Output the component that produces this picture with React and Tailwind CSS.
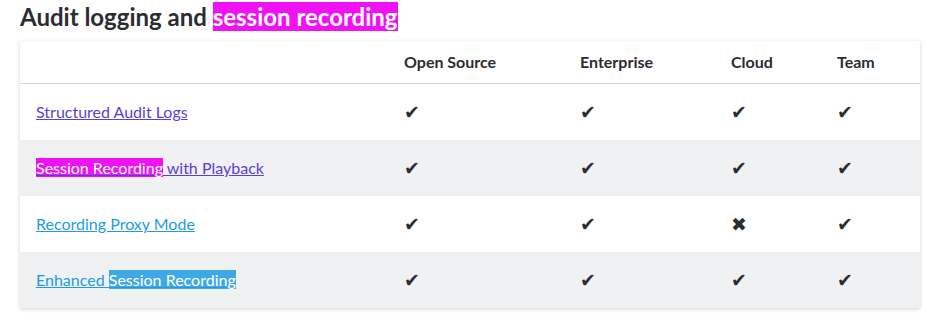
const rows = [
  { cells: ["✔", "✔", "✔", "✔"], bg: "bg-white", kind: "a" },
  { cells: ["✔", "✔", "✔", "✔"], bg: "bg-[#f0f1f3]", kind: "b" },
  { cells: ["✔", "✔", "✖", "✔"], bg: "bg-white", kind: "c" },
  { cells: ["✔", "✔", "✔", "✔"], bg: "bg-[#f0f1f3]", kind: "d" },
];

function Feature({ kind }) {
  if (kind === "a")
    return (
      <a href="#" className="text-[#5a3fd6] underline">
        Structured Audit Logs
      </a>
    );
  if (kind === "b")
    return (
      <a href="#" className="text-[#5a3fd6] underline">
        <span className="bg-[#f011f5] text-white">Session Recording</span> with Playback
      </a>
    );
  if (kind === "c")
    return (
      <a href="#" className="text-[#1e9be8] underline">
        Recording Proxy Mode
      </a>
    );
  return (
    <a href="#" className="text-[#1e9be8] underline">
      Enhanced <span className="bg-[#3fa9e6] text-white">Session Recording</span>
    </a>
  );
}

const grid = "grid grid-cols-[368px_176px_151px_106px_1fr]";

export default function App() {
  return (
    <div className="bg-white w-[940px] h-[325px] px-5 pt-[2px] font-['Lato',sans-serif] text-[#2b2d33]">
      <h2 className="text-[24px] leading-[29px] font-bold mb-[10px]">
        Audit logging and <span className="bg-[#f011f5] text-white">session recording</span>
      </h2>
      <div className="w-[900px] shadow-[0_1px_4px_rgba(0,0,0,0.18)]">
        <div className={`${grid} h-[43px] items-center border-b border-[#d4d8dc] text-[16px] font-bold`}>
          <div />
          <div className="px-4">Open Source</div>
          <div className="px-4">Enterprise</div>
          <div className="px-4">Cloud</div>
          <div className="px-4">Team</div>
        </div>
        {rows.map((r, i) => (
          <div key={i} className={`${grid} ${r.bg} h-[56px] items-center text-[16px]`}>
            <div className="px-4">
              <Feature kind={r.kind} />
            </div>
            {r.cells.map((c, j) => (
              <div key={j} className="px-4 text-[19px] leading-none font-['DejaVu_Sans',sans-serif]">
                {c}
              </div>
            ))}
          </div>
        ))}
      </div>
    </div>
  );
}
